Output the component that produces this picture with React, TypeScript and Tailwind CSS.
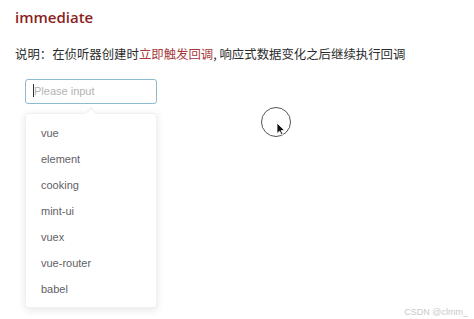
const options = ['vue', 'element', 'cooking', 'mint-ui', 'vuex', 'vue-router', 'babel']

export default function App() {
  return (
    <div className="relative flex h-[319px] w-[474px] flex-col overflow-hidden bg-white pl-[15px] pt-[7px]">
      {/* Title */}
      <h2 className="text-[15px] leading-[20px] font-semibold text-[#8b1f22] [font-family:'Open_Sans',sans-serif]">
        immediate
      </h2>

      {/* Description */}
      <p className="mt-[17px] whitespace-nowrap text-[12.4px] leading-[20px] text-[#2b2b2b] [font-family:'Noto_Sans_CJK_SC',sans-serif]">
        说明：在侦听器创建时<span className="text-[#a8393b]">立即触发回调</span>, 响应式数据变化之后继续执行回调
      </p>

      {/* Select input + dropdown */}
      <div className="ml-[10px] mt-[14px] flex w-[132px] flex-col gap-[9px] [font-family:'Liberation_Sans',Arial,sans-serif]">
        <div className="relative">
          <input
            readOnly
            placeholder="Please input"
            className="h-[25px] w-full rounded-[3px] border border-[#8dbcd0] pl-[8px] text-[11px] text-[#333] outline-none placeholder:text-[#b3b3b3]"
          />
          <span className="absolute left-[8px] top-[6px] h-[13px] w-px bg-[#333]" />
        </div>

        <div className="relative flex h-[195px] flex-col rounded-[3px] border border-[#f0f0f0] bg-white py-[6px] shadow-[0_2px_8px_rgba(0,0,0,0.1)]">
          <span className="absolute left-[61px] top-[-5px] h-[8px] w-[8px] rotate-45 border-l border-t border-[#eceef2] bg-white" />
          {options.map((o) => (
            <div key={o} className="h-[26px] pl-[15px] text-[11px] leading-[26px] text-[#5f6166]">
              {o}
            </div>
          ))}
        </div>
      </div>

      {/* Click indicator + cursor */}
      <div className="absolute left-[261px] top-[107px] h-[30px] w-[30px] rounded-full border-[1.5px] border-[#555]" />
      <svg className="absolute left-[276px] top-[122px]" width="10" height="14" viewBox="0 0 10 14">
        <path d="M1 1 L1 11.5 L3.6 9.2 L5.5 13 L7 12.3 L5.2 8.6 L8.6 8.4 Z" fill="#111" stroke="#fff" strokeWidth="0.8" />
      </svg>

      {/* Watermark */}
      <span className="absolute bottom-[1px] right-[6px] whitespace-nowrap text-[9px] leading-[12px] text-[#c9c9c9] [font-family:'Liberation_Sans',Arial,sans-serif]">
        CSDN @clmm_
      </span>
    </div>
  )
}
